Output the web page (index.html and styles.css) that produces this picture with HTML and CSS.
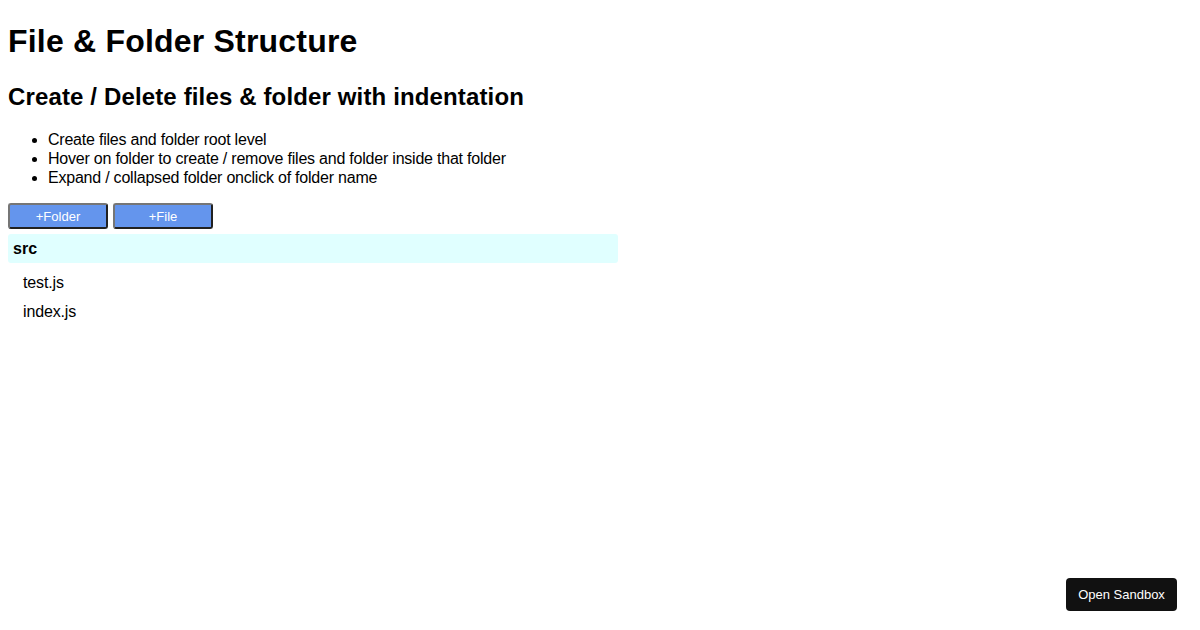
FILE: index.html
```html
<!DOCTYPE html>
<html>
<head>
<meta charset="utf-8">
<link rel="stylesheet" href="styles.css">
</head>
<body>
<h1>File &amp; Folder Structure</h1>
<h2>Create / Delete files &amp; folder with indentation</h2>
<ul>
<li>Create files and folder root level</li>
<li>Hover on folder to create / remove files and folder inside that folder</li>
<li>Expand / collapsed folder onclick of folder name</li>
</ul>
<div class="actions">
<button class="btn">+Folder</button>
<button class="btn">+File</button>
</div>
<div class="tree">
<div class="folder">src</div>
<div class="children">
<div class="file">test.js</div>
<div class="file">index.js</div>
</div>
</div>
<a class="sandbox">Open Sandbox</a>
</body>
</html>
```
FILE: styles.css
```css
html { margin: 0; padding: 0; }
body {
  margin: 0;
  padding: 0 8px;
  font-family: "Liberation Sans", Arial, sans-serif;
  font-size: 16px;
  color: #000;
  background: #fff;
}
h1 { font-size: 32px; margin: 23px 0 23px; letter-spacing: 0.2px; }
h2 { font-size: 24px; margin: 0 0 19px; letter-spacing: 0.14px; }
ul { margin: 0 0 16px; padding-left: 40px; line-height: 19px; letter-spacing: -0.22px; }
.actions { display: flex; gap: 5px; }
.btn {
  width: 100px;
  height: 26px;
  background: #6495ed;
  color: #fff;
  border: 2px outset #767676;
  border-radius: 3px;
  font-family: "Liberation Sans", Arial, sans-serif;
  font-size: 13px;
  padding: 0;
}
.tree { width: 610px; margin-top: 5px; }
.folder {
  background: #e0ffff;
  font-weight: bold;
  padding: 5px;
  height: 19px;
  line-height: 19px;
  border-radius: 3px;
}
.children { padding-left: 15px; padding-top: 5px; }
.file { height: 29px; line-height: 29px; letter-spacing: -0.15px; }
.sandbox {
  position: fixed;
  right: 23px;
  bottom: 19px;
  width: 111px;
  height: 33px;
  line-height: 33px;
  text-align: center;
  background: #111;
  color: #fff;
  border-radius: 4px;
  font-size: 13px;
}
```
